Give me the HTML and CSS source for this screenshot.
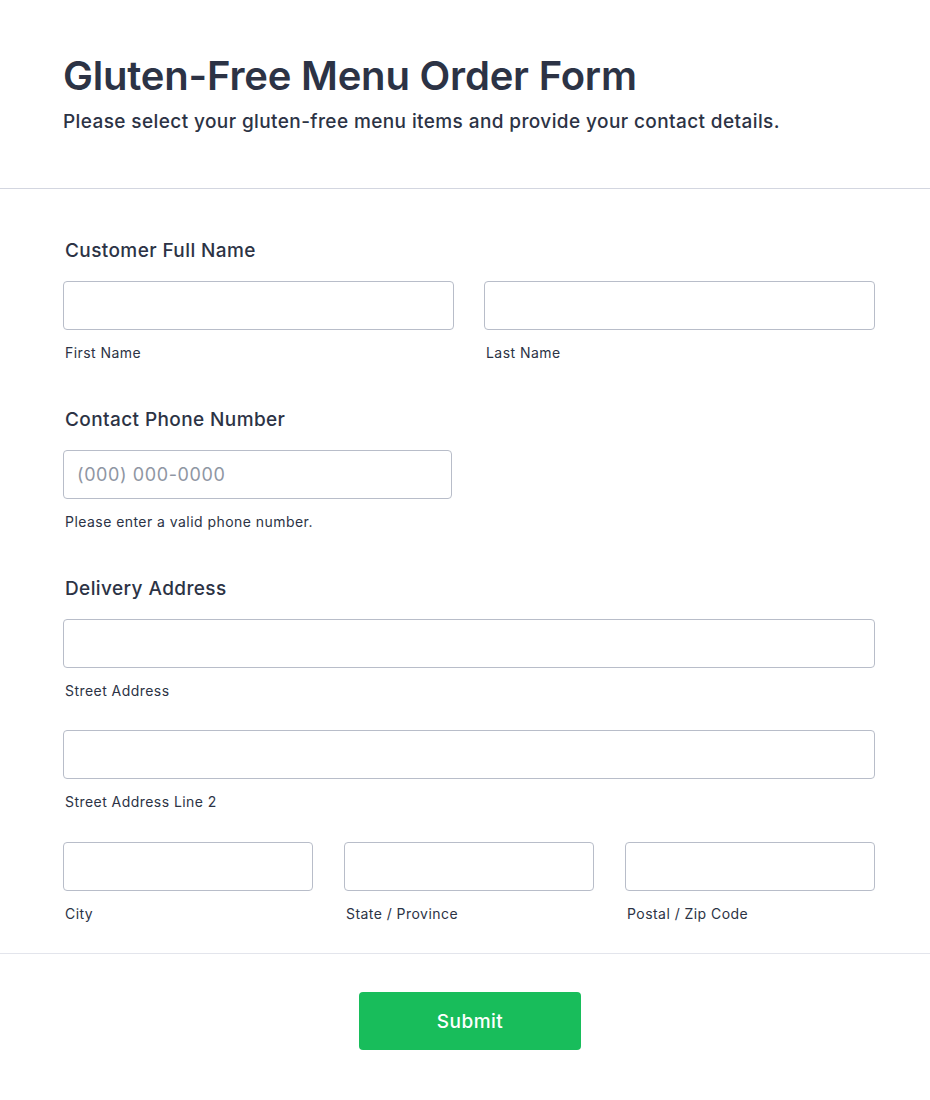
FILE: index.html
```html
<!DOCTYPE html>
<html lang="en">
<head>
<meta charset="utf-8">
<title>Gluten-Free Menu Order Form</title>
<link rel="stylesheet" href="styles.css">
</head>
<body>
<div class="page">
  <header class="form-header">
    <h1 class="form-title">Gluten-Free Menu Order Form</h1>
    <p class="form-subtitle">Please select your gluten-free menu items and provide your contact details.</p>
  </header>

  <form class="form-body">
    <div class="field">
      <label class="field-label">Customer Full Name</label>
      <div class="cols cols-2">
        <div class="sub">
          <input class="input" type="text">
          <span class="sublabel">First Name</span>
        </div>
        <div class="sub">
          <input class="input" type="text">
          <span class="sublabel">Last Name</span>
        </div>
      </div>
    </div>

    <div class="field">
      <label class="field-label">Contact Phone Number</label>
      <div class="sub phone">
        <input class="input" type="text" placeholder="(000) 000-0000">
        <span class="sublabel">Please enter a valid phone number.</span>
      </div>
    </div>

    <div class="field">
      <label class="field-label">Delivery Address</label>
      <div class="sub">
        <input class="input" type="text">
        <span class="sublabel">Street Address</span>
      </div>
      <div class="sub gap-top">
        <input class="input" type="text">
        <span class="sublabel">Street Address Line 2</span>
      </div>
      <div class="cols cols-3 gap-top-lg">
        <div class="sub">
          <input class="input" type="text">
          <span class="sublabel">City</span>
        </div>
        <div class="sub">
          <input class="input" type="text">
          <span class="sublabel">State / Province</span>
        </div>
        <div class="sub">
          <input class="input" type="text">
          <span class="sublabel">Postal / Zip Code</span>
        </div>
      </div>
    </div>
  </form>

  <div class="form-footer">
    <button class="submit" type="button">Submit</button>
  </div>
</div>
</body>
</html>
```

FILE: styles.css
```css
* { box-sizing: border-box; }

body {
  margin: 0;
  background: #ffffff;
  font-family: Inter, "Noto Sans", "Liberation Sans", sans-serif;
  color: #2c3345;
}

.page {
  width: 930px;
}

.form-header {
  padding: 52px 55px 54px 63px;
  border-bottom: 1px solid #d3d6e0;
}

.form-title {
  margin: 0;
  font-size: 40px;
  line-height: 48px;
  font-weight: 600;
  color: #2c3345;
  letter-spacing: -0.2px;
}

.form-subtitle {
  margin: 10px 0 0;
  font-size: 19px;
  line-height: 24px;
  font-weight: 500;
  letter-spacing: 0.4px;
  color: #2c3345;
}

.form-body {
  padding: 50px 55px 29px 63px;
  border-bottom: 1px solid #e3e5ec;
  display: flex;
  flex-direction: column;
  gap: 45px;
}

.field {
  display: flex;
  flex-direction: column;
}

.field-label {
  display: block;
  padding-left: 2px;
  font-size: 19px;
  line-height: 24px;
  font-weight: 500;
  letter-spacing: 0.4px;
  color: #2c3345;
  margin-bottom: 18px;
}

.cols {
  display: grid;
}

.cols-2 {
  grid-template-columns: 1fr 1fr;
  column-gap: 30px;
}

.cols-3 {
  grid-template-columns: 1fr 1fr 1fr;
  column-gap: 31px;
}

.sub {
  display: flex;
  flex-direction: column;
}

.phone {
  width: 389px;
}

.gap-top {
  margin-top: 29px;
}

.gap-top-lg {
  margin-top: 30px;
}

.input {
  display: block;
  width: 100%;
  height: 49px;
  margin: 0;
  padding: 0 13px;
  border: 1px solid #b8bdc9;
  border-radius: 4px;
  background: #ffffff;
  font-family: inherit;
  font-size: 18px;
  letter-spacing: 0.6px;
  color: #2c3345;
  outline: none;
}

.input::placeholder {
  color: #8f96a3;
}

.sublabel {
  display: block;
  margin-top: 13px;
  padding-left: 2px;
  font-size: 14px;
  line-height: 20px;
  font-weight: 400;
  letter-spacing: 0.45px;
  color: #2c3345;
}

.form-footer {
  display: flex;
  justify-content: center;
  padding: 38px 0 50px 0;
}

.submit {
  width: 222px;
  height: 58px;
  border: none;
  border-radius: 4px;
  background: #18bd5b;
  color: #ffffff;
  font-family: inherit;
  font-size: 19px;
  font-weight: 500;
  letter-spacing: 0.5px;
  cursor: pointer;
  margin-left: 10px;
}
```
